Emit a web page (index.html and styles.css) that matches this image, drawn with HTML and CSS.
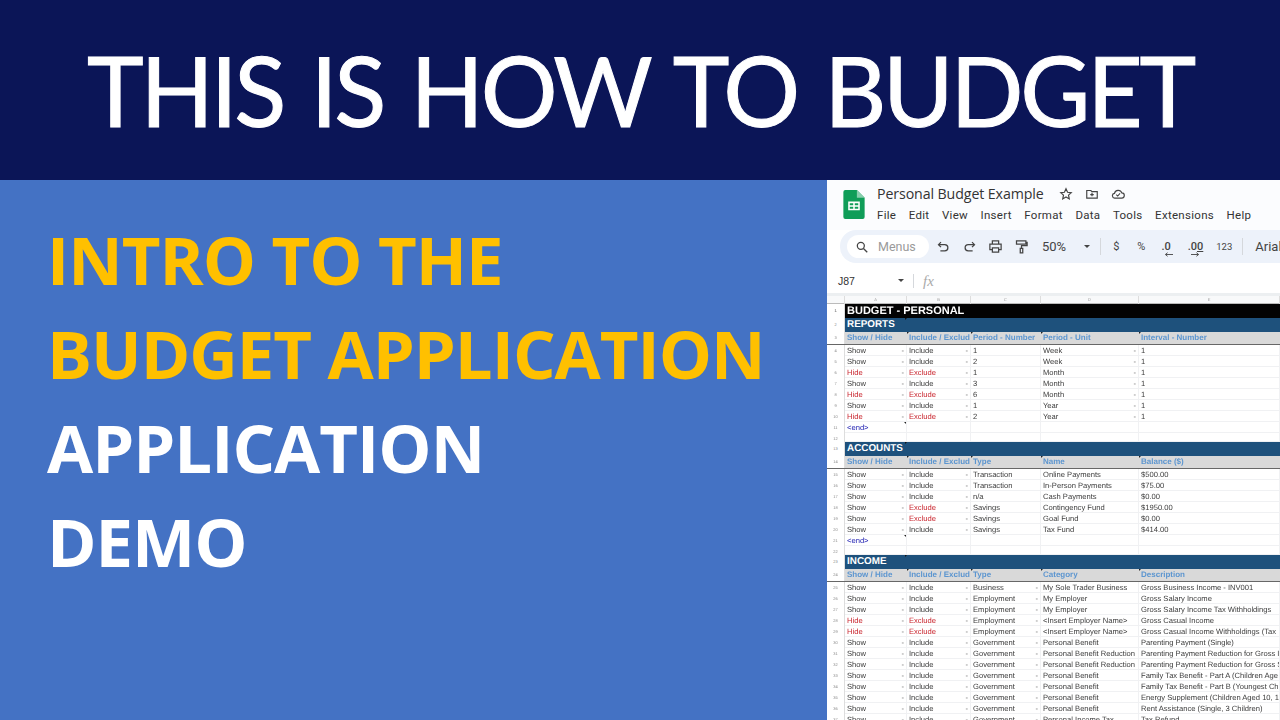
FILE: index.html
```html
<!DOCTYPE html>
<html lang="en">
<head>
<meta charset="utf-8">
<title>This is how to budget</title>
<link rel="stylesheet" href="styles.css">
</head>
<body>
<header class="banner"><h1>THIS IS HOW TO BUDGET</h1></header>
<main class="content">
<section class="intro">
<p class="gold">INTRO TO THE</p>
<p class="gold">BUDGET APPLICATION</p>
<p>APPLICATION</p>
<p>DEMO</p>
</section>
<section class="app">
<div class="titlebar">
<svg class="logo" viewBox="0 0 22 30"><path d="M2 0h12l8 8v20a2 2 0 0 1-2 2H2a2 2 0 0 1-2-2V2a2 2 0 0 1 2-2z" fill="#0f9d58"/><path d="M14 0l8 8h-8z" fill="#87ceac"/><path d="M5 12h12v9H5zm1.600 1.600v2.200h3.600v-2.200zm5.200 0v2.200h3.600v-2.200zm-5.200 3.700v2.200h3.600v-2.200zm5.200 0v2.200h3.600v-2.200z" fill="#fff" fill-rule="evenodd"/></svg>
<div class="titletext">
<div class="docline"><span class="docname">Personal Budget Example</span>
<svg class="ico" viewBox="0 0 24 24"><path d="M12 3l2.700 6 6.300.7-4.700 4.300 1.300 6.400L12 17.200 6.400 20.400l1.300-6.400L3 9.700 9.300 9z" fill="none" stroke="#444" stroke-width="2"/></svg>
<svg class="ico" viewBox="0 0 24 24"><path d="M3 6h7l2 2h9v11H3z" fill="none" stroke="#444" stroke-width="2"/><path d="M12 10v6M9 13h6" stroke="#444" stroke-width="2"/></svg>
<svg class="ico" viewBox="0 0 24 24"><path d="M7 19a4 4 0 0 1-1-8 6.500 6.500 0 0 1 12.500-1A4.500 4.500 0 0 1 18 19z" fill="none" stroke="#444" stroke-width="2"/><path d="M9 13l2.500 2.500L15.500 11" fill="none" stroke="#444" stroke-width="1.800"/></svg>
</div>
<nav class="menu"><span>File</span><span>Edit</span><span>View</span><span>Insert</span><span>Format</span><span>Data</span><span>Tools</span><span>Extensions</span><span>Help</span></nav>
</div>
</div>
<div class="toolbar">
<div class="search"><svg class="ico" viewBox="0 0 24 24"><circle cx="10" cy="10" r="6" fill="none" stroke="#444" stroke-width="2.200"/><path d="M14.500 14.500L21 21" stroke="#444" stroke-width="2.200"/></svg><span>Menus</span></div>
<svg class="tool t-undo" viewBox="0 0 24 24"><path d="M8 5L4 9l4 4M4 9h10a5 5 0 0 1 0 10H7" fill="none" stroke="#444" stroke-width="2"/></svg>
<svg class="tool" viewBox="0 0 24 24"><path d="M16 5l4 4-4 4M20 9H10a5 5 0 0 0 0 10h7" fill="none" stroke="#444" stroke-width="2"/></svg>
<svg class="tool" viewBox="0 0 24 24"><path d="M7 8V3h10v5M7 17H3V8h18v9h-4M7 14h10v7H7z" fill="none" stroke="#444" stroke-width="2"/></svg>
<svg class="tool" viewBox="0 0 24 24"><path d="M4 3h15v5H4zM19 5.500h2v5h-9v4M10 15h4v7h-4z" fill="none" stroke="#444" stroke-width="2"/></svg>
<span class="zoomval">50%</span><span class="caret"></span><span class="sep s1"></span>
<span class="tt t-dollar">$</span><span class="tt t-pct">%</span>
<span class="tt t-dec">.0<svg viewBox="0 0 10 5"><path d="M10 2.500H2M4 .5L1.500 2.500 4 4.500" fill="none" stroke="#444"/></svg></span>
<span class="tt t-inc">.0<u>0</u><svg viewBox="0 0 10 5"><path d="M0 2.500h8M6 .5l2.500 2L6 4.500" fill="none" stroke="#444"/></svg></span>
<span class="tt t-123">123</span><span class="sep s2"></span><span class="font">Arial</span>
</div>
<div class="formula"><span class="ref">J87</span><span class="caret"></span><span class="sep s3"></span><span class="fx">fx</span></div>
<div class="sheet">
<div class="row colhead"><i></i><i>A</i><i>B</i><i>C</i><i>D</i><i>E</i></div>
<div class="row title"><i>1</i><b>BUDGET - PERSONAL</b></div>
<div class="row section"><i>2</i><b>REPORTS</b></div>
<div class="row head"><i>3</i><b>Show / Hide</b><b>Include / Exclud</b><b>Period - Number</b><b>Period - Unit</b><b>Interval - Number</b></div>
<div class="row"><i>4</i><span class="dd">Show</span><span class="dd">Include</span><span>1</span><span class="dd">Week</span><span>1</span></div>
<div class="row"><i>5</i><span class="dd">Show</span><span class="dd">Include</span><span>2</span><span class="dd">Week</span><span>1</span></div>
<div class="row"><i>6</i><span class="dd red">Hide</span><span class="dd red">Exclude</span><span>1</span><span class="dd">Month</span><span>1</span></div>
<div class="row"><i>7</i><span class="dd">Show</span><span class="dd">Include</span><span>3</span><span class="dd">Month</span><span>1</span></div>
<div class="row"><i>8</i><span class="dd red">Hide</span><span class="dd red">Exclude</span><span>6</span><span class="dd">Month</span><span>1</span></div>
<div class="row"><i>9</i><span class="dd">Show</span><span class="dd">Include</span><span>1</span><span class="dd">Year</span><span>1</span></div>
<div class="row"><i>10</i><span class="dd red">Hide</span><span class="dd red">Exclude</span><span>2</span><span class="dd">Year</span><span>1</span></div>
<div class="row"><i>11</i><span class="end">&lt;end&gt;</span><span></span><span></span><span></span><span></span></div>
<div class="row gap"><i>12</i><span></span><span></span><span></span><span></span><span></span></div>
<div class="row section"><i>13</i><b>ACCOUNTS</b></div>
<div class="row head"><i>14</i><b>Show / Hide</b><b>Include / Exclud</b><b>Type</b><b>Name</b><b>Balance ($)</b></div>
<div class="row"><i>15</i><span class="dd">Show</span><span class="dd">Include</span><span>Transaction</span><span>Online Payments</span><span>$500.00</span></div>
<div class="row"><i>16</i><span class="dd">Show</span><span class="dd">Include</span><span>Transaction</span><span>In-Person Payments</span><span>$75.00</span></div>
<div class="row"><i>17</i><span class="dd">Show</span><span class="dd">Include</span><span>n/a</span><span>Cash Payments</span><span>$0.00</span></div>
<div class="row"><i>18</i><span class="dd">Show</span><span class="dd red">Exclude</span><span>Savings</span><span>Contingency Fund</span><span>$1950.00</span></div>
<div class="row"><i>19</i><span class="dd">Show</span><span class="dd red">Exclude</span><span>Savings</span><span>Goal Fund</span><span>$0.00</span></div>
<div class="row"><i>20</i><span class="dd">Show</span><span class="dd">Include</span><span>Savings</span><span>Tax Fund</span><span>$414.00</span></div>
<div class="row"><i>21</i><span class="end">&lt;end&gt;</span><span></span><span></span><span></span><span></span></div>
<div class="row gap"><i>22</i><span></span><span></span><span></span><span></span><span></span></div>
<div class="row section"><i>23</i><b>INCOME</b></div>
<div class="row head"><i>24</i><b>Show / Hide</b><b>Include / Exclud</b><b>Type</b><b>Category</b><b>Description</b></div>
<div class="row"><i>25</i><span class="dd">Show</span><span class="dd">Include</span><span class="dd">Business</span><span>My Sole Trader Business</span><span>Gross Business Income - INV001</span></div>
<div class="row"><i>26</i><span class="dd">Show</span><span class="dd">Include</span><span class="dd">Employment</span><span>My Employer</span><span>Gross Salary Income</span></div>
<div class="row"><i>27</i><span class="dd">Show</span><span class="dd">Include</span><span class="dd">Employment</span><span>My Employer</span><span>Gross Salary Income Tax Withholdings</span></div>
<div class="row"><i>28</i><span class="dd red">Hide</span><span class="dd red">Exclude</span><span class="dd">Employment</span><span>&lt;Insert Employer Name&gt;</span><span>Gross Casual Income</span></div>
<div class="row"><i>29</i><span class="dd red">Hide</span><span class="dd red">Exclude</span><span class="dd">Employment</span><span>&lt;Insert Employer Name&gt;</span><span>Gross Casual Income Withholdings (Tax</span></div>
<div class="row"><i>30</i><span class="dd">Show</span><span class="dd">Include</span><span class="dd">Government</span><span>Personal Benefit</span><span>Parenting Payment (Single)</span></div>
<div class="row"><i>31</i><span class="dd">Show</span><span class="dd">Include</span><span class="dd">Government</span><span>Personal Benefit Reduction</span><span>Parenting Payment Reduction for Gross I</span></div>
<div class="row"><i>32</i><span class="dd">Show</span><span class="dd">Include</span><span class="dd">Government</span><span>Personal Benefit Reduction</span><span>Parenting Payment Reduction for Gross S</span></div>
<div class="row"><i>33</i><span class="dd">Show</span><span class="dd">Include</span><span class="dd">Government</span><span>Personal Benefit</span><span>Family Tax Benefit - Part A (Children Age</span></div>
<div class="row"><i>34</i><span class="dd">Show</span><span class="dd">Include</span><span class="dd">Government</span><span>Personal Benefit</span><span>Family Tax Benefit - Part B (Youngest Ch</span></div>
<div class="row"><i>35</i><span class="dd">Show</span><span class="dd">Include</span><span class="dd">Government</span><span>Personal Benefit</span><span>Energy Supplement (Children Aged 10, 1</span></div>
<div class="row"><i>36</i><span class="dd">Show</span><span class="dd">Include</span><span class="dd">Government</span><span>Personal Benefit</span><span>Rent Assistance (Single, 3 Children)</span></div>
<div class="row"><i>37</i><span class="dd">Show</span><span class="dd">Include</span><span class="dd">Government</span><span>Personal Income Tax</span><span>Tax Refund</span></div>
</div>
</section>
</main>
</body>
</html>
```
FILE: styles.css
```css
* { box-sizing: border-box; }
html, body { margin: 0; padding: 0; }
body { width: 1280px; height: 720px; overflow: hidden; background: #4472c4; font-family: "Liberation Sans", Arial, sans-serif; }

.banner { height: 180px; background: #0b1557; display: flex; align-items: center; justify-content: center; }
.banner h1 { margin: 0; font: 400 96px/1 Lato, sans-serif; color: #fff; letter-spacing: -3.200px; word-spacing: 6px; white-space: nowrap; -webkit-text-stroke: 1px #fff; }

.content { display: grid; grid-template-columns: 827px 453px; height: 540px; }
.intro { padding: 32px 0 0 47px; }
.intro p { margin: 0; font: 700 67px/94px "Open Sans", sans-serif; letter-spacing: -1px; color: #fff; white-space: nowrap; }
.intro .gold { color: #ffc000; }

.app { background: #fff; overflow: hidden; display: flex; flex-direction: column; color: #444; }
.titlebar { height: 50px; display: flex; padding: 5px 0 0 16px; background: #fbfcfe; }
.logo { width: 22px; height: 29px; margin-top: 5px; }
.titletext { margin-left: 12px; }
.docline { display: flex; align-items: center; height: 17px; gap: 12px; }
.docname { font: 400 14.200px/17px "Open Sans", sans-serif; color: #333; margin-right: 3px; letter-spacing: -.1px; }
.ico { width: 14px; height: 14px; flex: none; }
.menu { display: flex; gap: 12.500px; margin-top: 6px; font: 400 11.500px/14px Roboto, sans-serif; letter-spacing: .3px; color: #333; }

.toolbar { height: 33px; margin: 0 0 0 13px; background: #edf2fa; border-radius: 16px 0 0 16px; display: flex; align-items: center; font: 400 11px/14px Roboto, sans-serif; color: #444; }
.search { margin-left: 7px; width: 82px; height: 23px; background: #fff; border-radius: 12px; display: flex; align-items: center; gap: 9px; padding-left: 8px; color: #9a9a9a; font-size: 12.500px; flex: none; }
.tool { width: 15px; height: 15px; flex: none; margin-left: 11px; }
.tool.t-undo { margin-left: 6.500px; }
.zoomval { margin-left: 13.500px; font-size: 13px; }
.caret { width: 0; height: 0; border: 3px solid transparent; border-top: 3.500px solid #444; border-bottom: 0; }
.toolbar .caret { margin-left: 18px; }
.sep { width: 1px; height: 17px; background: #d5d8dc; flex: none; }
.s1 { margin-left: 10px; }
.tt { font-size: 11px; position: relative; }
.t-dollar { margin-left: 12px; }
.t-pct { margin-left: 18px; }
.t-dec { margin-left: 16px; font-weight: 500; line-height: 10px; }
.t-inc { margin-left: 17px; font-weight: 500; line-height: 10px; }
.tt svg { position: absolute; left: 3px; top: 10px; width: 9px; height: 5px; }
.t-123 { margin-left: 13px; font-size: 9.500px; }
.s2 { margin-left: 10px; }
.font { margin-left: 12px; font-size: 13px; white-space: nowrap; }

.formula { height: 30px; display: flex; align-items: center; padding: 5px 0 0 11px; background: #fff; font: 400 10.500px/14px "Liberation Sans", sans-serif; color: #333; }
.ref { width: 60px; }
.formula .caret { margin-right: 9px; }
.formula .sep { height: 14px; }
.fx { margin-left: 9px; font: italic 400 15px/14px "Liberation Serif", serif; color: #aaa; }

.sheet { border-top: 3px solid #eceff1; flex: 1; overflow: hidden; opacity: .99; text-rendering: geometricPrecision; }
.row { display: grid; grid-template-columns: 18px 62px 64px 70px 98px 1fr; height: 11px; border-bottom: 1px solid #f0f1f3; font-size: 7.600px; line-height: 11px; color: #3a3a3a; white-space: nowrap; }
.row.gap { height: 9px; }
.row > i { font-style: normal; font-size: 4px; text-align: center; color: #888; background: #fff; border-right: 1px solid #ddd; }
.row > span, .row > b { padding-left: 2px; border-right: 1px solid #f0f1f3; overflow: hidden; min-width: 0; position: relative; }
.dd { display: flex; justify-content: space-between; padding-right: 2px; }
.dd::after { content: "-"; color: #666; }
.row .red { color: #c8232c; }
.end { color: #1a1ab0; }
.end::after, .head b + b::before, .section::after { content: ""; position: absolute; border-style: solid; border-color: transparent; }
.end::after { top: 0; right: 0; border-width: 0 2px 2px 0; border-right-color: #222; }
.head b + b::before { top: 0; left: 0; border-width: 2px 2px 0 0; border-top-color: #222; }

.colhead { height: 8px; line-height: 8px; background: #f8f9fa; border-bottom: 1px solid #bbb; }
.colhead > i { background: transparent; border-right: 1px solid #ddd; color: #999; }
.row.title { grid-template-columns: 18px 1fr; height: 14px; background: #000; color: #fff; font-size: 11px; line-height: 14px; font-weight: 700; border: 0; }
.row.title b { border: 0; }
.row.section { position: relative; grid-template-columns: 18px 1fr; height: 14px; background: #1c4f7b; color: #fff; font-size: 9.900px; line-height: 14px; border: 0; }
.row.section b { border: 0; }
.row.section::after { top: 0; left: 78px; border-width: 2px 2px 0 0; border-top-color: #111; }
.row.head { height: 13px; background: #d9d9d9; color: #5b95d0; font-size: 8px; line-height: 12px; border-bottom: 1.500px solid #666; }
.row.head b { border: 0; }
```
